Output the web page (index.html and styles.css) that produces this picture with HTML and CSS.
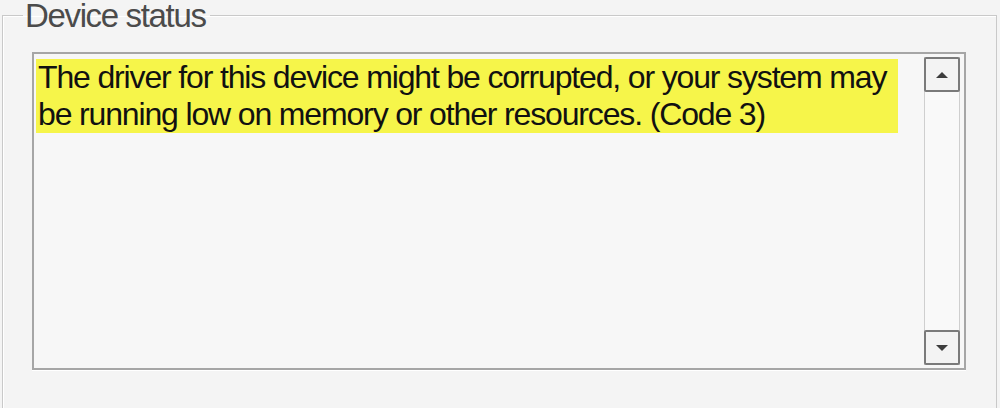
FILE: index.html
```html
<!DOCTYPE html>
<html>
<head>
<meta charset="utf-8">
<link rel="stylesheet" href="styles.css">
</head>
<body>
<fieldset class="group">
  <legend class="group-title">Device status</legend>
  <div class="textbox">
    <div class="text-area">
      <div class="highlight">The driver for this device might be corrupted, or your system may<br>be running low on memory or other resources. (Code 3)</div>
    </div>
    <div class="scrollbar">
      <div class="sb-btn sb-up"><span class="arrow-up"></span></div>
      <div class="sb-track"></div>
      <div class="sb-btn sb-down"><span class="arrow-down"></span></div>
    </div>
  </div>
</fieldset>
</body>
</html>
```

FILE: styles.css
```css
html, body {
  margin: 0;
  padding: 0;
  background: #f4f4f4;
  height: 408px;
  overflow: hidden;
}

body {
  font-family: "Liberation Sans", Arial, sans-serif;
}

.group {
  margin: 0 3px 0 2px;
  padding: 22px 29px 0 29px;
  border: 1px solid #c9c9c9;
  box-shadow: inset 1px 1px 0 #ffffff;
  height: 420px;
  box-sizing: border-box;
  min-width: 0;
}

.group-title {
  margin-left: -9px;
  padding: 2px 4px 0 2px;
  font-size: 33px;
  line-height: 28px;
  letter-spacing: -1.35px;
  color: #4b4b4b;
}

.textbox {
  display: grid;
  grid-template-columns: 1fr 36px;
  width: 934px;
  height: 318px;
  box-sizing: border-box;
  border: 2px solid #a6a6a6;
  background: #f7f7f7;
  padding: 3px 4px 3px 2px;
  box-shadow: 0 1px 0 #ffffff;
}

.text-area {
  padding-top: 2px;
}

.highlight {
  width: 860px;
  padding-left: 2px;
  background: #f6f54a;
  color: #111111;
  font-size: 32px;
  line-height: 37px;
  letter-spacing: -1.15px;
  white-space: nowrap;
}

.scrollbar {
  display: flex;
  flex-direction: column;
  border-left: 1px solid #cfcfcf;
  border-right: 1px solid #cfcfcf;
  background: #f9f9f9;
}

.sb-btn {
  height: 35px;
  box-sizing: border-box;
  border: 2px solid #7a7a7a;
  border-radius: 2px;
  background: #f3f3f3;
  display: flex;
  align-items: center;
  justify-content: center;
  margin: 0 -1px;
}

.sb-track {
  flex: 1;
}

.arrow-up {
  width: 0;
  height: 0;
  border-left: 6px solid transparent;
  border-right: 6px solid transparent;
  border-bottom: 6px solid #3c3c3c;
}

.arrow-down {
  width: 0;
  height: 0;
  border-left: 6px solid transparent;
  border-right: 6px solid transparent;
  border-top: 6px solid #3c3c3c;
}
```
